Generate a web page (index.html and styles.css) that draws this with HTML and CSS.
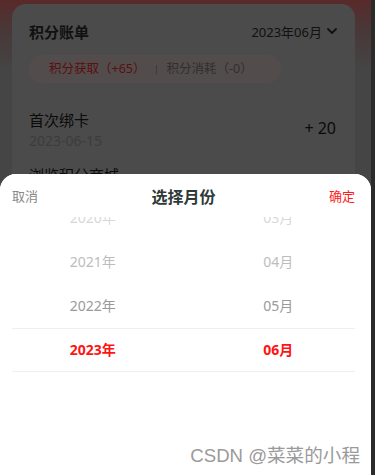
FILE: index.html
```
<!DOCTYPE html>
<html lang="zh-CN">
<head>
<meta charset="utf-8">
<title>积分账单</title>
<link rel="stylesheet" href="styles.css">
</head>
<body>
<div class="app">
  <div class="page">
    <div class="card">
      <div class="card-head">
        <span class="card-title">积分账单</span>
        <span class="month-select">2023年06月<svg class="chev" viewBox="0 0 10 6" width="10" height="6"><path d="M1 1 L5 5 L9 1" fill="none" stroke="#333" stroke-width="1.8" stroke-linecap="round" stroke-linejoin="round"/></svg></span>
      </div>
      <div class="tabs">
        <span class="tab active">积分获取（+65）</span>
        <span class="tab-sep"></span>
        <span class="tab">积分消耗（-0）</span>
      </div>
      <ul class="records">
        <li class="record">
          <div class="rec-info">
            <div class="rec-name">首次绑卡</div>
            <div class="rec-date">2023-06-15</div>
          </div>
          <div class="rec-points">+ 20</div>
        </li>
        <li class="record">
          <div class="rec-info">
            <div class="rec-name">浏览积分商城</div>
          </div>
        </li>
      </ul>
    </div>
  </div>
  <div class="mask"></div>
  <div class="sheet">
    <div class="sheet-head">
      <span class="btn-cancel">取消</span>
      <span class="sheet-title">选择月份</span>
      <span class="btn-ok">确定</span>
    </div>
    <div class="picker">
      <div class="picker-cols">
        <div class="col">
          <div class="row far">2020年</div>
          <div class="row near">2021年</div>
          <div class="row mid">2022年</div>
          <div class="row sel">2023年</div>
        </div>
        <div class="col">
          <div class="row far">03月</div>
          <div class="row near">04月</div>
          <div class="row mid">05月</div>
          <div class="row sel">06月</div>
        </div>
      </div>
      <div class="indicator"></div>
    </div>
  </div>
  <div class="watermark">CSDN @菜菜的小程</div>
</div>
</body>
</html>
```
FILE: styles.css
```
* { box-sizing: border-box; }
html, body {
  margin: 0;
  padding: 0;
  background: #2b2b2b;
}
body {
  font-family: "Noto Sans", "Noto Sans CJK SC", sans-serif;
  width: 375px;
  height: 475px;
  overflow: hidden;
}
.app {
  position: relative;
  width: 371px;
  height: 475px;
  overflow: hidden;
}
.page {
  height: 100%;
  padding-top: 4px;
  background: linear-gradient(to bottom, #ff7878 0px, #d0a0a0 30px, #c5c5c5 70px, #c5c5c5 100%);
}
.card {
  margin: 0 16px 0 12px;
  background: #d7d7d7;
  border-radius: 14px;
  padding: 16px 18px 0 17px;
  height: 600px;
}
.card-head {
  display: flex;
  justify-content: space-between;
  align-items: center;
  height: 22px;
}
.card-title {
  font-size: 15px;
  font-weight: bold;
  color: #333;
}
.month-select {
  display: flex;
  align-items: center;
  font-size: 13px;
  color: #333;
}
.chev { margin-left: 5px; }
.tabs {
  margin-top: 13px;
  display: inline-flex;
  align-items: center;
  height: 28px;
  border-radius: 14px;
  padding: 0 28px 0 20px;
  background: #ecd9d9;
}
.tab {
  font-size: 12.5px;
  color: #8a8a8a;
  line-height: 28px;
}
.tab.active { color: #ff3030; }
.tab-sep {
  width: 1px;
  height: 9px;
  background: #a8a8a8;
  margin: 0 9px 0 11px;
}
.records {
  list-style: none;
  margin: 26px 0 0;
  padding: 0;
  display: flex;
  flex-direction: column;
  gap: 13px;
}
.record {
  display: flex;
  justify-content: space-between;
  align-items: center;
}
.rec-name {
  font-size: 15px;
  line-height: 22px;
  color: #222;
}
.rec-date {
  font-size: 14px;
  line-height: 20px;
  color: #ababab;
}
.rec-points {
  font-size: 16px;
  color: #222;
  margin-right: 1px;
  margin-top: -4px;
}
.mask {
  position: absolute;
  inset: 0;
  background: rgba(0, 0, 0, 0.65);
}
.sheet {
  position: absolute;
  left: 0;
  right: 0;
  bottom: 0;
  height: 301px;
  background: #fff;
  border-radius: 16px 16px 0 0;
  overflow: hidden;
}
.sheet-head {
  position: relative;
  z-index: 2;
  background: #fff;
  height: 43px;
  display: flex;
  justify-content: space-between;
  align-items: center;
  padding: 0 16px 0 12px;
}
.btn-cancel {
  font-size: 13px;
  color: #888;
}
.sheet-title {
  font-size: 16px;
  font-weight: bold;
  color: #2f3a37;
}
.btn-ok {
  font-size: 13px;
  color: #ff1a1a;
}
.picker {
  position: relative;
  height: 258px;
  overflow: hidden;
}
.picker-cols {
  display: flex;
  margin-top: -21px;
}
.col {
  flex: 1;
  text-align: center;
}
.row {
  height: 44px;
  line-height: 44px;
  font-size: 14px;
}
.row.far { color: #d8d8d8; }
.row.near { color: #bdbdbd; }
.row.mid { color: #9a9a9a; }
.row.sel { color: #ff1414; font-weight: bold; }
.indicator {
  position: absolute;
  top: 111px;
  left: 12px;
  right: 16px;
  height: 44px;
  border-top: 1px solid #efefef;
  border-bottom: 1px solid #efefef;
}
.watermark {
  position: absolute;
  right: 11px;
  bottom: 8px;
  font-family: "Liberation Sans", "Noto Sans CJK SC", sans-serif;
  font-size: 18.6px;
  color: #9a9a9a;
  text-shadow: 0 0 1px #fff;
}
```
